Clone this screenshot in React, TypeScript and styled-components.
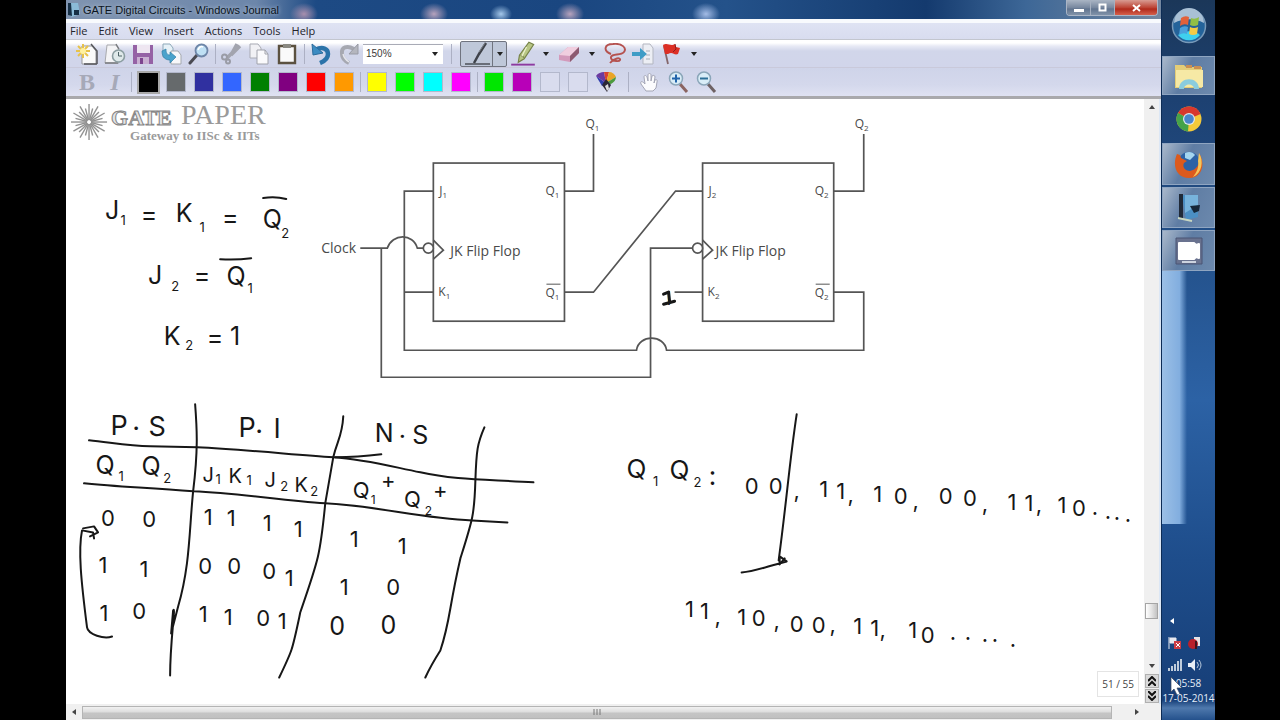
import React from "react";
import styled, { createGlobalStyle } from "styled-components";

const uiFont = `"Open Sans", "Noto Sans", sans-serif`;

const GlobalStyle = createGlobalStyle`
  * { box-sizing: border-box; }
  html, body { margin: 0; background: #000; }
  body { font-family: ${uiFont}; overflow: hidden; }
  button { border: 0; padding: 0; background: none; font: inherit; color: inherit; }
  svg { display: block; }
`;

const Desktop = styled.div`
  display: flex;
  height: 100vh;
  padding: 0 65px 0 66px;
  background: #000;
`;

const Window = styled.main`
  flex: 1;
  min-width: 0;
  display: flex;
  flex-direction: column;
  background: #fff;
`;

const TitleBar = styled.header`
  height: 19px;
  flex: none;
  display: flex;
  align-items: center;
  gap: 3px;
  padding-left: 1px;
  overflow: hidden;
  background:
    radial-gradient(ellipse 14px 11px at 238px 14px, #a88fae, transparent),
    radial-gradient(ellipse 14px 11px at 368px 14px, #b7a3bd, transparent),
    radial-gradient(ellipse 11px 9px at 435px 14px, #a5c8ea, transparent),
    radial-gradient(ellipse 14px 11px at 504px 14px, #b7a3bd, transparent),
    radial-gradient(ellipse 14px 11px at 640px 14px, #a4bce6, transparent),
    linear-gradient(90deg, #8094b0 0, #6c86aa 190px, #1d4a84 250px, #1a4680 500px, #24528a 660px, #143a6e 860px, #3d6797 960px, #74879f 100%);
`;

const Title = styled.h1`
  flex: 1;
  margin: 0;
  font-family: "Liberation Sans", sans-serif;
  font-size: 11px;
  line-height: 18px;
  font-weight: 400;
  color: #0b1420;
  white-space: nowrap;
  text-shadow: 0 0 4px #c4d2e4;
`;

const Controls = styled.div`
  align-self: flex-start;
  display: flex;
  margin-right: 3px;
  border: 1px solid #aab5c6;
  border-top: 0;
  border-radius: 0 0 4px 4px;
  overflow: hidden;
`;

const Control = styled.button<{ $close?: boolean }>`
  width: ${(p) => (p.$close ? 42 : 24)}px;
  height: 15px;
  display: grid;
  place-items: center;
  border-right: ${(p) => (p.$close ? 0 : 1)}px solid #a5b0c0;
  background: ${(p) =>
    p.$close
      ? "linear-gradient(#d89b92, #bd4536 50%, #b02a1c 60%, #d5604b)"
      : "linear-gradient(#aab5c4, #78889f 50%, #61748f 60%, #8193a9)"};
`;

const MenuBar = styled.nav`
  height: 21px;
  flex: none;
  display: flex;
  align-items: center;
  gap: 11px;
  padding: 0 4px;
  border-top: 4px solid #f8fafd;
  border-bottom: 1px solid #c3c6cf;
  background: linear-gradient(#dfe3f3, #d8dcef);
`;

const MenuItem = styled.button`
  font-size: 11px;
  line-height: 14px;
  color: #23242b;
`;

const Toolbars = styled.section`
  flex: none;
  border-bottom: 3px solid #a9a9ac;
`;

const ToolRow = styled.div<{ $second?: boolean }>`
  height: ${(p) => (p.$second ? 29 : 27)}px;
  display: flex;
  align-items: center;
  padding-left: 7px;
  overflow: hidden;
  background: ${(p) =>
    p.$second
      ? "linear-gradient(#cfd4e9, #d4d8ec 60%, #dfe2f2)"
      : "linear-gradient(#fff 3px, #e8eaf5 6px, #d1d6ea 11px, #d1d5ea)"};
  border-top: ${(p) => (p.$second ? "1px solid #c9c9da" : "0")};
`;

const Tool = styled.button`
  width: 28px;
  height: 26px;
  flex: none;
  display: grid;
  place-items: center;
`;

const Letter = styled.span<{ $italic?: boolean }>`
  font: ${(p) => (p.$italic ? "italic " : "")}bold 24px / 26px "Liberation Serif", serif;
  color: #a6a9b8;
`;

const Separator = styled.span<{ $width: number }>`
  width: ${(p) => p.$width}px;
  height: 20px;
  flex: none;
  background: linear-gradient(#acb0c4, #acb0c4) center / 1px 100% no-repeat;
`;

const Swatch = styled.span<{ $color: string; $active?: boolean }>`
  width: ${(p) => (p.$active ? 23 : 20)}px;
  height: ${(p) => (p.$active ? 23 : 20)}px;
  border: ${(p) => (p.$active ? "2px solid #a8a8a8" : "1px solid #b3b8cc")};
  background: ${(p) => p.$color};
`;

const ZoomField = styled.label`
  position: relative;
  display: block;
  width: 80px;
  height: 20px;
  flex: none;
  svg { position: absolute; right: 4px; top: 8px; pointer-events: none; }
`;

const ZoomSelect = styled.select`
  appearance: none;
  display: block;
  width: 100%;
  height: 100%;
  padding: 0 3px;
  border: 0;
  border-top: 1px solid #a9abb6;
  border-radius: 0;
  background: #fff;
  font: 10px / 18px "Liberation Sans", sans-serif;
  color: #3a3a3a;
`;

const SplitButton = styled.div`
  display: flex;
  flex: none;
  width: 47px;
  height: 26px;
  margin-right: 2px;
  border: 1px solid #70747f;
  border-radius: 2px;
  background: #bfc8d9;
  overflow: hidden;
`;

const SplitMain = styled.button`
  flex: 1;
  display: grid;
  place-items: center;
  border-right: 1px solid #70747f;
`;

const Arrow = styled.button<{ $width: number }>`
  width: ${(p) => p.$width}px;
  flex: none;
  display: grid;
  place-items: center;
`;

const Workspace = styled.div`
  flex: 1;
  min-height: 0;
  display: flex;
  background: #fff;
`;

const Paper = styled.section`
  position: relative;
  flex: 1;
  min-width: 0;
  overflow: hidden;
  > svg { width: 100%; height: auto; }
`;

const PageCount = styled.output`
  position: absolute;
  right: 5px;
  bottom: 7px;
  padding: 0 4px;
  border: 1px solid #e4e4e4;
  background: #fff;
  font-size: 10px;
  line-height: 24px;
  color: #444;
`;

const VScroll = styled.div`
  width: 17px;
  flex: none;
  display: flex;
  flex-direction: column;
  align-items: center;
  padding-top: 1px;
  border-right: 2px solid #dce7f5;
  background: #f0f0f0;
`;

const VTrack = styled.div`
  flex: 1;
  display: flex;
  flex-direction: column;
  justify-content: flex-end;
  padding-bottom: 40px;
`;

const VThumb = styled.span`
  width: 13px;
  height: 16px;
  border: 1px solid #a5a5a5;
  background: linear-gradient(90deg, #fff, #e4e4e4 50%, #c2c2c2);
`;

const StepButton = styled.button`
  width: 14px;
  height: 14px;
  margin-bottom: 1px;
  flex: none;
  display: grid;
  place-items: center;
`;

const PageButton = styled(StepButton)`
  border: 1px solid #b0b0b0;
  background: #d9d9d9;
`;

const HScroll = styled.div`
  height: 16px;
  flex: none;
  display: flex;
  align-items: center;
  background: #f0f0f0;
`;

const HThumb = styled.span`
  flex: 1;
  height: 13px;
  display: grid;
  place-items: center;
  border: 1px solid #b4b4b4;
  background: linear-gradient(#f1f1f1, #dcdcdc 48%, #c5c5c5 52%, #c0c0c0);
`;

const ScrollEnd = styled.button<{ $width: number }>`
  width: ${(p) => p.$width}px;
  height: 16px;
  flex: none;
  display: grid;
  place-items: center;
`;

const Taskbar = styled.aside`
  width: 54px;
  flex: none;
  display: flex;
  flex-direction: column;
  border-left: 1px solid #0d2c55;
  background:
    linear-gradient(90deg, #9cc0e6, #82aedf 70%, transparent) 0 270px / 25px 254px no-repeat,
    linear-gradient(#1b3759, #1d4172 100px, #24528c 260px, #2c62a5 400px, #1e4d8b 560px, #173f78 700px, #4f79ad 708px, #24518c);
`;

const StartButton = styled.button`
  height: 56px;
  flex: none;
  display: grid;
  place-items: center;
  padding-bottom: 5px;
`;

const Task = styled.button<{ $open?: boolean; $height: number }>`
  height: ${(p) => p.$height}px;
  flex: none;
  display: grid;
  place-items: center;
  margin-bottom: 2px;
  border: 1px solid ${(p) => (p.$open ? "#8fa5c1" : "transparent")};
  background: ${(p) =>
    p.$open ? "linear-gradient(115deg, #a9b8cb, #5f7da4 45%, #6c89ad)" : "none"};
`;

const Tray = styled.div`
  margin-top: auto;
  padding-bottom: 14px;
  display: flex;
  flex-direction: column;
  font-size: 10px;
  line-height: 15px;
  color: #e6eef8;
`;

const TrayRow = styled.div`
  display: flex;
  gap: 6px;
  height: 22px;
  align-items: center;
  padding-left: 6px;
`;

const Clock = styled.time`
  position: relative;
  display: flex;
  justify-content: center;
  white-space: nowrap;
`;

const Pointer = styled.svg`
  position: absolute;
  left: 7px;
  top: 0;
`;

const Mark = styled.text`
  font-family: Inter, "Open Sans", sans-serif;
  font-weight: 400;
  fill: #171717;
  text-anchor: middle;
`;

const Label = styled.text`
  font-family: ${uiFont};
  fill: #4a4a4a;
`;

const LogoText = styled.text<{ $outline?: boolean }>`
  font-family: "Liberation Serif", serif;
  fill: ${(p) => (p.$outline ? "#e4e4e4" : "#9a9a9a")};
  stroke: ${(p) => (p.$outline ? "#858585" : "none")};
`;

const Down = ({ w = 6, color = "#222" }: { w?: number; color?: string }) => (
  <svg width={w} height="4" viewBox="0 0 6 4" aria-hidden="true">
    <path d="M0 0h6L3 4z" fill={color} />
  </svg>
);

const Icon = ({ size = 22, children }: { size?: number; children: React.ReactNode }) => (
  <svg width={size} height={size} viewBox="0 0 22 22" fill="none" aria-hidden="true">
    {children}
  </svg>
);

const icons = {
  note: (
    <Icon>
      <path d="M6 3h10l4 5v13H6z" fill="#fafafa" stroke="#97979b" />
      <path d="M15 1l6 7v13M8 21h13" stroke="#55565a" strokeWidth="1.5" />
      <path d="M7 1v14M0 8h14M2 3l10 10M12 3L2 13" stroke="#e7c24a" strokeWidth="2" />
      <circle cx="7" cy="8" r="3" fill="#fff1a0" />
    </Icon>
  ),
  recent: (
    <Icon>
      <path d="M3 2h9l3 5v13H1z" fill="#f4f4f6" stroke="#a8a9ad" />
      <path d="M12 1l3 5M1 20h13" stroke="#77797d" strokeWidth="1.4" />
      <circle cx="14.500" cy="13" r="6" fill="#dfe9ea" stroke="#8b9da1" strokeWidth="1.6" />
      <path d="M14.500 9v4h3.500" stroke="#4f6468" />
    </Icon>
  ),
  save: (
    <Icon>
      <path d="M1 2h20v19H1z" fill="#9562a5" />
      <path d="M5 2h13v8H5z" fill="#eee6f1" />
      <path d="M5 14h12v7H5z" fill="#c9b0d2" />
      <path d="M8 15h3v6H8z" fill="#7d458f" />
    </Icon>
  ),
  exportPage: (
    <Icon>
      <path d="M3 1h7l3 4v9H3z" fill="#e6f1f7" stroke="#8ea9b9" />
      <path d="M11 8h7l3 4v9H11z" fill="#f8f8fa" stroke="#a5a9af" />
      <path d="M2 8c0 7 4 9 8 9v3l6-6-6-5v3c-3 0-4-2-4-6z" fill="#4ba3cc" stroke="#327fa8" strokeWidth=".7" />
    </Icon>
  ),
  find: (
    <Icon>
      <path d="M2 20l7-8" stroke="#4a4a52" strokeWidth="3" strokeLinecap="round" />
      <circle cx="13.500" cy="7.500" r="6" fill="#bfe0f4" stroke="#6e86a8" strokeWidth="1.8" />
      <path d="M10 7c1-3 3-4 5-3" stroke="#fff" strokeWidth="1.5" />
    </Icon>
  ),
  cut: (
    <Icon>
      <path d="M17 1l-6 11M20 3l-9 9M12 10l-5 5" stroke="#a2a4ae" strokeWidth="3.500" />
      <circle cx="4.500" cy="14" r="2.500" stroke="#9a9ca6" strokeWidth="2" />
      <circle cx="8" cy="18.500" r="2" stroke="#9a9ca6" strokeWidth="2" />
    </Icon>
  ),
  copy: (
    <Icon>
      <path d="M2 1h8l3 4v10H2z" fill="#f1f1f5" stroke="#a9abb4" />
      <path d="M9 7h8l3 4v10H9z" fill="#fafafc" stroke="#a0a2ab" />
      <path d="M17 7v4h3" stroke="#a0a2ab" />
    </Icon>
  ),
  paste: (
    <Icon>
      <path d="M3 3h16v17H3z" fill="#fafafa" stroke="#5b5140" strokeWidth="2.400" />
      <path d="M7 1h8v4H7z" fill="#8b8a83" />
    </Icon>
  ),
  undo: (
    <Icon>
      <path d="M5 7c8-4 13-1 13 4 0 4-3 7-8 9" stroke="#2b73a9" strokeWidth="4.500" />
      <path d="M2 1l1 11 10-2z" fill="#3b8bc2" stroke="#2b6c9d" />
    </Icon>
  ),
  redo: (
    <Icon>
      <path d="M16 6C9 2 3 4 4 11c0 4 3 7 7 9" stroke="#a6a8b1" strokeWidth="4" />
      <path d="M5 11c1 4 3 6 6 8" stroke="#e4e5eb" strokeWidth="1.400" />
      <path d="M20 1v10h-9z" fill="#b4b6be" stroke="#999ba5" />
    </Icon>
  ),
  highlighter: (
    <Icon size={26}>
      <path d="M1 20h20" stroke="#8d3aa0" strokeWidth="1.600" />
      <path d="M7 18l1-6 8-11 4 2-8 12z" fill="#b8c684" stroke="#758247" />
      <path d="M9 12l3 2" stroke="#758247" />
      <path d="M14 5l-4 8" stroke="#edf2ce" />
    </Icon>
  ),
  eraser: (
    <Icon>
      <path d="M1 12l9-8h11v6l-9 9-11-2z" fill="#d39abb" />
      <path d="M1 12l9-8h11l-9 9z" fill="#f0cedf" />
      <path d="M12 13l9-9v6l-9 9z" fill="#8c5a70" />
    </Icon>
  ),
  lasso: (
    <Icon>
      <path d="M7 11C-1 8 0 1 9 1c9-1 14 4 11 8-3 4-12 1-13 5-1 4 8 5 9 3 1-3-6-2-10 3" stroke="#b5524f" strokeWidth="1.900" />
    </Icon>
  ),
  insertSpace: (
    <Icon>
      <path d="M11 1h7l3 4v16H11z" fill="#eceef4" stroke="#b3b6c0" />
      <path d="M0 9h8V5l7 6-7 6v-4H0z" fill="#3e9cc6" />
      <path d="M14 8h4M14 12h4M14 16h4" stroke="#a8afb9" />
    </Icon>
  ),
  flag: (
    <Icon>
      <path d="M4 3l4 18" stroke="#84666a" strokeWidth="1.800" />
      <path d="M3 2c5-3 7 2 12-1l1 3 4 1-2 6c-4 2-5-3-10 0H5z" fill="#dc2f25" />
      <path d="M15 1l1 5-3 3" stroke="#8e1c18" />
    </Icon>
  ),
  palette: (
    <Icon>
      <path d="M1 5l10 7-4 3z" fill="#313fae" />
      <path d="M1 5c2-3 5-4 8-4l2 11z" fill="#6b3aa0" />
      <path d="M9 1h5l-3 11z" fill="#d8422e" />
      <path d="M14 1c3 0 6 2 7 5l-10 6z" fill="#e9a526" />
      <path d="M21 6c0 3-2 5-5 7l-5-1z" fill="#4c9a3e" />
      <path d="M7 14l4-6 5 6-4 7z" fill="#2b2735" />
      <path d="M10 15l3-2 1 5-2 2z" fill="#ddd" />
    </Icon>
  ),
  hand: (
    <Icon>
      <path d="M7 20l-5-7c-1-3 1-3 3-1l1 1-1-7c0-2 2-2 3 0l1 4V4c0-2 3-2 3 0v6l1-5c1-1 3-1 3 1l-1 6 1-3c1-1 3 0 2 2l-1 6-3 3z" fill="#fbfbfd" stroke="#a4a6b6" />
    </Icon>
  ),
  zoomIn: (
    <Icon>
      <path d="M13 13l7 8" stroke="#8a6461" strokeWidth="3" />
      <circle cx="9" cy="7.500" r="6.500" fill="#d9edf7" stroke="#8ba6b9" strokeWidth="1.500" />
      <path d="M9 3.500v8M5 7.500h8" stroke="#2164ab" strokeWidth="2" />
    </Icon>
  ),
  zoomOut: (
    <Icon>
      <path d="M13 13l7 8" stroke="#6e6264" strokeWidth="3" />
      <circle cx="9" cy="7.500" r="6.500" fill="#d9edf7" stroke="#8ba6b9" strokeWidth="1.500" />
      <path d="M5 7.500h8" stroke="#2c6f97" strokeWidth="2" />
    </Icon>
  ),
};

const pens = ["#000000", "#666a6c", "#3030a0", "#3366ff", "#008000", "#800080", "#ff0000", "#ff9900"];
const markers = ["#ffff00", "#00ff00", "#00ffff", "#ff00ff"];
const recents = ["#00e600", "#b800b8", "#d9dcee", "#d9dcee"];
const menus = ["File", "Edit", "View", "Insert", "Actions", "Tools", "Help"];

type InkProps = { s: string; x: string; y: string; size?: number; sub?: number };

/* One written line: an underscore before a character makes it a subscript. */
const Ink = ({ s, x, y, size = 22, sub = 13 }: InkProps) => {
  const xs = x.split(" ");
  const ys = y.split(" ");
  const glyphs = s.match(/_?[^_]/g) ?? [];
  return (
    <Mark fontSize={size}>
      {glyphs.map((g, i) => (
        <tspan key={i} x={xs[i]} y={ys[i]} fontSize={g.length > 1 ? sub : size}>
          {g.slice(-1)}
        </tspan>
      ))}
    </Mark>
  );
};

const FlipFlop = ({ x, n, nameX }: { x: number; n: number; nameX: number }) => (
  <g>
    <rect x={x} y="163" width="131" height="158" />
    <circle cx={x - 5} cy="248" r="5" fill="#fff" />
    <path d={`M${x} 240l10 10-10 9`} />
    <path d={`M${x + 113} 284h14`} strokeWidth="1" />
    <g stroke="none">
      <Label x={x + 6} y="195" fontSize="12">J<tspan fontSize="8" dy="3">{n}</tspan></Label>
      <Label x={x + 5} y="296" fontSize="12">K<tspan fontSize="8" dy="3">{n}</tspan></Label>
      <Label x={x + 112} y="195" fontSize="12">Q<tspan fontSize="8" dy="3">{n}</tspan></Label>
      <Label x={x + 112} y="297" fontSize="12">Q<tspan fontSize="8" dy="3">{n}</tspan></Label>
      <Label x={x + 152} y="128" fontSize="12">Q<tspan fontSize="8" dy="3">{n}</tspan></Label>
      <Label x={nameX} y="256" fontSize="14">JK Flip Flop</Label>
    </g>
  </g>
);

const Circuit = () => (
  <g fill="none" stroke="#555" strokeWidth="1.700">
    <path d="M564 191h29v-57M833 191h30v-57" />
    <path d="M433 191h-29v159h232c2-16 28-16 30 0h197v-58h-30" />
    <path d="M404 292h29M564 292h29l82-101h27M674 292h28" />
    <path d="M360 248h27c5-15 26-15 30 0h6M381 248v129h269V248h42" />
    <FlipFlop x={433} n={1} nameX={450} />
    <FlipFlop x={702} n={2} nameX={715} />
    <g stroke="none">
      <Label x="321" y="253" fontSize="14">Clock</Label>
    </g>
  </g>
);

const rays = Array.from({ length: 24 }, (_, i) => (i * Math.PI) / 12);

const Logo = () => (
  <g>
    <g stroke="#929292" strokeWidth="1.400">
      {rays.map((a, i) => {
        const r = i % 2 ? 14 : 18;
        return (
          <line
            key={i}
            x1={89 + 2 * Math.cos(a)}
            y1={122 + 2 * Math.sin(a)}
            x2={89 + r * Math.cos(a)}
            y2={122 + r * Math.sin(a)}
          />
        );
      })}
    </g>
    <LogoText $outline x="111" y="125" fontSize="22" fontWeight="bold">GATE</LogoText>
    <LogoText x="181" y="124" fontSize="28">PAPER</LogoText>
    <LogoText x="130" y="140" fontSize="13" fontWeight="bold">Gateway to IISc &amp; IITs</LogoText>
  </g>
);

const Notes = () => (
  <g>
    <Ink s="J_1=K_1=Q_2" x="112 123 149 184 202 230 272 285" y="219 225 223 222 232 226 228 238" size={25} />
    <Ink s="J_2=Q_1" x="155 175 202 236 250" y="284 291 284 285 293" size={25} />
    <Ink s="K_2=1" x="172 189 215 235" y="345 350 346 345" size={25} />
    <Ink s="1" x="667" y="305" size={18} />

    <Ink s="P.S" x="119 136 157" y="435 430 436" size={27} />
    <Ink s="P.I" x="247 259 277" y="437 433 438" size={27} />
    <Ink s="N.S" x="384 402 420" y="442 438 444" size={25} />
    <Ink s="Q_1Q_2" x="105 121 151 167" y="474 481 475 483" size={25} />
    <Ink s="J_1K_1J_2K_2" x="208 218 235 249 270 284 301 314" y="482 484 483 485 487 491 492 496" size={20} />
    <Ink s="Q_1+Q_2+" x="361 373 388 412 428 440" y="498 504 488 507 515 498" sub={12} />

    <Ink s="00" x="108 149" y="526 527" />
    <Ink s="1111" x="208 231 267 298" y="525 526 531 537" />
    <Ink s="11" x="354 402" y="547 554" />
    <Ink s="11" x="103 144" y="573 577" />
    <Ink s="0001" x="205 234 269 289" y="574 574 579 586" />
    <Ink s="10" x="344 393" y="595 595" />
    <Ink s="10" x="104 139" y="621 619" />
    <Ink s="1101" x="203 228 263 282" y="622 625 626 629" />
    <Ink s="00" x="337 388" y="635 634" size={25} />

    <Ink s="Q_1Q_2:" x="636 655 679 697 712" y="478 486 479 487 485" size={26} />
    <Ink s="00,11,10,00,11,10...." x="751 775 796 823 840 850 877 900 915 945 969 984 1011 1028 1038 1061 1078 1094 1107 1116 1127" y="494 494 498 497 499 502 502 504 508 504 506 511 510 511 512 513 516 515 519 520 522" />
    <Ink s="11,10,00,11,10....." x="689 704 717 741 758 776 796 818 832 857 874 882 912 927 952 967 984 994 1012" y="617 619 624 625 626 628 632 633 632 634 636 637 638 643 640 640 642 642 647" />

    <g fill="none" stroke="#171717" strokeWidth="2" strokeLinecap="round" strokeLinejoin="round">
      <path d="M263 198q12-2 23 1M220 259q16 1 31-1" />
      <path d="M89 440C110 442 128 446 150 446L197 447C240 449 290 454 333 457C365 459 390 466 420 472C455 480 490 479 533 482" />
      <path d="M335 457C350 457 365 456 381 454" />
      <path d="M84 483C120 487 150 487 193 491C240 493 280 500 325 503C380 506 420 518 472 520L507 522" />
      <path d="M195 404C197 430 198 450 193 491C189 530 190 565 178 606L171 633L173 610C176 604 170 640 170 675" />
      <path d="M343 416C342 436 337 440 333 457L325 503C320 555 318 560 300 612L299 617C292 650 292 650 279 677" />
      <path d="M484 427C477 443 476 450 475 480C474 515 472 520 460 558C448 610 450 620 440 650C433 661 430 666 425 677" />
      <path d="M94 538L93 532L82 530C78 550 81 580 87 627C88 634 104 639 112 636M83 528l11-2 4 6-8 4" />
      <path d="M796 414C789 460 786 500 778 560M741 572C755 571 766 566 786 561L779 556V564L784 558" />
      <path d="M663 294l5-2 1 9M663 304l11-3" strokeWidth="3" />
    </g>
  </g>
);

const SwatchButtons = ({ colors, name, first }: { colors: string[]; name: string; first?: boolean }) => (
  <>
    {colors.map((c, i) => (
      <Tool key={i} aria-label={`${name} ${i + 1}`}>
        <Swatch $color={c} $active={first && i === 0} />
      </Tool>
    ))}
  </>
);

const App = () => (
  <>
    <GlobalStyle />
    <Desktop>
      <Window>
        <TitleBar>
          <svg width="13" height="15" viewBox="0 0 13 15" aria-hidden="true">
            <path d="M2 1h9l2 11-8 3-3-2z" fill="#8bbbd8" />
            <path d="M1 1h3l1 13-4-1zM7 8h5v5H7z" fill="#173046" />
          </svg>
          <Title>GATE Digital Circuits - Windows Journal</Title>
          <Controls>
            <Control aria-label="Minimize">
              <svg width="10" height="8"><path d="M0 5h10v3H0z" fill="#fff" /></svg>
            </Control>
            <Control aria-label="Maximize">
              <svg width="9" height="9"><path d="M1.500 1.500h6v6h-6z" fill="none" stroke="#fff" strokeWidth="2" /></svg>
            </Control>
            <Control $close aria-label="Close">
              <svg width="9" height="8"><path d="M1 1l7 6M8 1L1 7" stroke="#fff" strokeWidth="2" /></svg>
            </Control>
          </Controls>
        </TitleBar>
        <MenuBar>
          {menus.map((m) => (
            <MenuItem key={m}>{m}</MenuItem>
          ))}
        </MenuBar>
        <Toolbars>
          <ToolRow>
            <Tool aria-label="New note">{icons.note}</Tool>
            <Tool aria-label="Recent">{icons.recent}</Tool>
            <Tool aria-label="Save">{icons.save}</Tool>
            <Tool aria-label="Export">{icons.exportPage}</Tool>
            <Tool aria-label="Find">{icons.find}</Tool>
            <Separator $width={4} />
            <Tool aria-label="Cut">{icons.cut}</Tool>
            <Tool aria-label="Copy">{icons.copy}</Tool>
            <Tool aria-label="Paste">{icons.paste}</Tool>
            <Separator $width={6} />
            <Tool aria-label="Undo">{icons.undo}</Tool>
            <Tool aria-label="Redo">{icons.redo}</Tool>
            <ZoomField>
              <ZoomSelect aria-label="Zoom" defaultValue="150%">
                <option>150%</option>
              </ZoomSelect>
              <Down w={8} />
            </ZoomField>
            <Separator $width={17} />
            <SplitButton>
              <SplitMain aria-label="Pen">
                <svg width="30" height="24" viewBox="0 0 30 24" aria-hidden="true">
                  <path d="M3 22h25" stroke="#4c5057" strokeWidth="1.500" />
                  <path d="M12 21l5-9 7-11" stroke="#3f434a" strokeWidth="2.500" />
                  <path d="M17 10l6-9" stroke="#7f858d" />
                </svg>
              </SplitMain>
              <Arrow $width={13} aria-label="Pen options"><Down /></Arrow>
            </SplitButton>
            <Tool aria-label="Highlighter">{icons.highlighter}</Tool>
            <Arrow $width={18} aria-label="Highlighter options"><Down /></Arrow>
            <Tool aria-label="Eraser">{icons.eraser}</Tool>
            <Arrow $width={18} aria-label="Eraser options"><Down /></Arrow>
            <Tool aria-label="Selection">{icons.lasso}</Tool>
            <Tool aria-label="Insert space">{icons.insertSpace}</Tool>
            <Tool aria-label="Flag">{icons.flag}</Tool>
            <Arrow $width={18} aria-label="Flag options"><Down /></Arrow>
          </ToolRow>
          <ToolRow $second>
            <Tool aria-label="Bold"><Letter>B</Letter></Tool>
            <Tool aria-label="Italic"><Letter $italic>I</Letter></Tool>
            <Separator $width={5} />
            <SwatchButtons colors={pens} name="Pen colour" first />
            <Separator $width={5} />
            <SwatchButtons colors={markers} name="Marker colour" />
            <Separator $width={5} />
            <SwatchButtons colors={recents} name="Recent colour" />
            <Tool aria-label="More colours">{icons.palette}</Tool>
            <Separator $width={16} />
            <Tool aria-label="Pan">{icons.hand}</Tool>
            <Tool aria-label="Zoom in">{icons.zoomIn}</Tool>
            <Tool aria-label="Zoom out">{icons.zoomOut}</Tool>
          </ToolRow>
        </Toolbars>
        <Workspace>
          <Paper>
            <svg viewBox="66 99 1077 605" role="img" aria-label="JK flip flop circuit with notes">
              <Logo />
              <Circuit />
              <Notes />
            </svg>
            <PageCount>51 / 55</PageCount>
          </Paper>
          <VScroll>
            <StepButton aria-label="Scroll up">
              <svg width="6" height="4"><path d="M0 4h6L3 0z" fill="#444" /></svg>
            </StepButton>
            <VTrack><VThumb /></VTrack>
            <StepButton aria-label="Scroll down"><Down color="#444" /></StepButton>
            <PageButton aria-label="Previous page">
              <svg width="8" height="10"><path d="M0 5l4-4 4 4M0 10l4-4 4 4" fill="none" stroke="#111" strokeWidth="2" /></svg>
            </PageButton>
            <PageButton aria-label="Next page">
              <svg width="8" height="10"><path d="M0 0l4 4 4-4M0 5l4 4 4-4" fill="none" stroke="#111" strokeWidth="2" /></svg>
            </PageButton>
          </VScroll>
        </Workspace>
        <HScroll>
          <ScrollEnd $width={16} aria-label="Scroll left">
            <svg width="4" height="6"><path d="M4 0v6L0 3z" fill="#444" /></svg>
          </ScrollEnd>
          <HThumb>
            <svg width="8" height="6"><path d="M1 0v6M4 0v6M7 0v6" stroke="#777" /></svg>
          </HThumb>
          <ScrollEnd $width={49} aria-label="Scroll right">
            <svg width="4" height="6"><path d="M0 0v6l4-3z" fill="#444" /></svg>
          </ScrollEnd>
        </HScroll>
      </Window>
      <Taskbar>
        <StartButton aria-label="Start">
          <svg width="36" height="36" viewBox="0 0 36 36" aria-hidden="true">
            <circle cx="18" cy="18" r="16.500" fill="#24639a" stroke="#7899b8" strokeWidth="1.500" />
            <path d="M3 15a15 15 0 0130 0c-10-5-20-5-30 0z" fill="#a9c0d5" />
            <path d="M7 27c7-5 15-5 22 0a14 14 0 01-22 0z" fill="#3fd0ee" />
            <path d="M10 10q4-3 8-1l-1 8q-4-2-8 1z" fill="#e2613a" />
            <path d="M20 10q4 2 8-1l-1 8q-4 2-8 0z" fill="#91bf45" />
            <path d="M9 20q4-3 8-1l-1 7q-4-2-8 1z" fill="#4aa0dc" />
            <path d="M19 19q4 2 8 0l-1 7q-4 2-8 0z" fill="#f4cb46" />
          </svg>
        </StartButton>
        <Task $open $height={39} aria-label="Explorer">
          <svg width="30" height="28" viewBox="0 0 30 28" aria-hidden="true">
            <path d="M1 3h9l2 2h16v21H1z" fill="#e4cd77" />
            <path d="M2 8h27v17H2z" fill="#f6e9a5" />
            <path d="M12 3h6v3h-6zM20 4h7v3h-7z" fill="#c98f54" />
            <path d="M5 27c0-13 20-13 20 0h-5c0-6-10-6-10 0z" fill="#8accde" />
          </svg>
        </Task>
        <Task $height={44} aria-label="Chrome">
          <svg width="26" height="26" viewBox="0 0 26 26" aria-hidden="true">
            <circle cx="13" cy="13" r="12.500" fill="#f4ca3a" />
            <path d="M13 13L2 7a12.500 12.500 0 0122.500 1z" fill="#d8382d" />
            <path d="M13 13L2 7a12.500 12.500 0 0010 18.500z" fill="#45a34a" />
            <circle cx="13" cy="13" r="6" fill="#dfe8ee" />
            <circle cx="13" cy="13" r="4.800" fill="#4a86cc" />
          </svg>
        </Task>
        <Task $open $height={42} aria-label="Firefox">
          <svg width="30" height="29" viewBox="0 0 30 29" aria-hidden="true">
            <circle cx="15" cy="13" r="11" fill="#2c62a6" />
            <path d="M11 3c4-2 8-1 10 2l-5 5-5-2z" fill="#a4d5ef" />
            <path d="M3 4C-2 15 2 28 15 28c13 0 17-14 10-25 2 8-1 17-9 18-5 0-8-4-6-8l3-2-6-3-1-3z" fill="#dc5a1d" />
            <path d="M25 3c5 8 3 20-6 24 4-5 6-10 5-16z" fill="#f4c65a" />
          </svg>
        </Task>
        <Task $open $height={41} aria-label="Windows Journal">
          <svg width="26" height="30" viewBox="0 0 26 30" aria-hidden="true">
            <path d="M6 2h16v22l-12 3z" fill="#4b8fc4" />
            <path d="M9 2h13v10L9 20z" fill="#77b3dc" />
            <path d="M3 1h4v25H3z" fill="#202a38" />
            <path d="M14 13l10-1-1 6-5 2z" fill="#16283a" />
            <path d="M2 25l14 3" stroke="#c8d7c2" strokeWidth="2" />
          </svg>
        </Task>
        <Task $open $height={41} aria-label="Recorder">
          <svg width="28" height="28" viewBox="0 0 28 28" aria-hidden="true">
            <path d="M1 1h26v26H1z" fill="#69728f" stroke="#4b5575" />
            <path d="M4 6h15l2 2 3-1v14l-3-1-2 2H4z" fill="#fff" stroke="#fff" strokeWidth="2" strokeLinejoin="round" />
            <path d="M7 25h14" stroke="#cdd3df" strokeWidth="2" />
          </svg>
        </Task>
        <Tray>
          <TrayRow>
            <svg width="8" height="6"><path d="M6 0v6L2 3z" fill="#fff" /></svg>
          </TrayRow>
          <TrayRow>
            <svg width="14" height="12"><path d="M1 0v12M2 1h6v5H2z" fill="#e8eaf0" stroke="#e8eaf0" /><path d="M6 4h7v8H6z" fill="#cc3d46" /><path d="M8 6l4 4M12 6l-4 4" stroke="#fff" /></svg>
            <svg width="14" height="12"><path d="M6 0h6v9H6z" fill="#e8e2e4" /><circle cx="5" cy="7" r="5" fill="#b91f2a" /><path d="M8 4v8" stroke="#40121b" strokeWidth="2" /></svg>
          </TrayRow>
          <TrayRow>
            <svg width="14" height="12"><path d="M0 12V9h2v3zM3 12V7h2v5zM6 12V5h2v7zM9 12V2h2v10zM12 12V0h2v12z" fill="#bfccdb" /></svg>
            <svg width="14" height="12"><path d="M0 4h3l4-4v12L3 8H0z" fill="#e8eef5" /><path d="M9 3q3 3 0 6M11 1q4 5 0 10" fill="none" stroke="#b5c6da" /></svg>
          </TrayRow>
          <Clock>
            05:58
            <Pointer width="14" height="20" viewBox="0 0 14 20" aria-hidden="true">
              <path d="M2 1v15l3-3 3 6 3-1-3-6h5z" fill="#fff" stroke="#33445d" strokeWidth=".7" />
            </Pointer>
          </Clock>
          <Clock>17-05-2014</Clock>
        </Tray>
      </Taskbar>
    </Desktop>
  </>
);

export default App;
